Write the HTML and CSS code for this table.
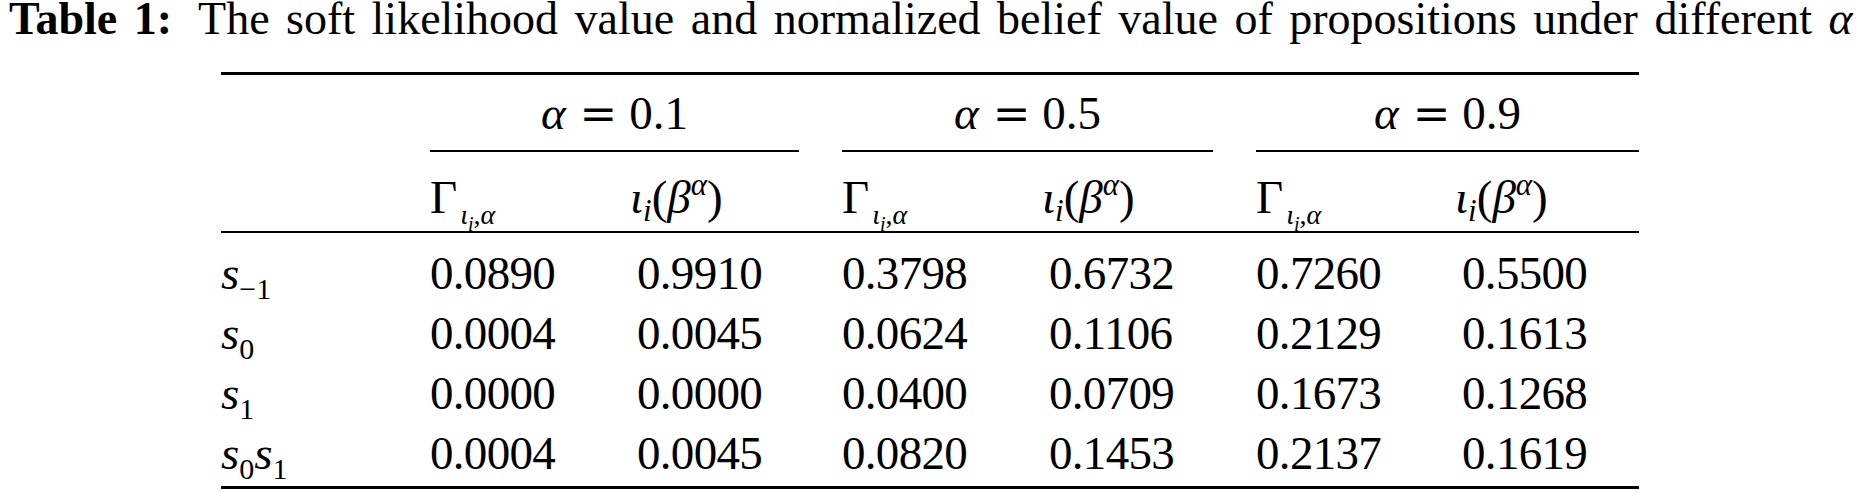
FILE: index.html
```html
<!DOCTYPE html>
<html lang="en">
<head>
<meta charset="utf-8">
<title>Table 1</title>
<link rel="stylesheet" href="styles.css">
</head>
<body>
<p class="caption"><b class="caption-label">Table 1:</b>The soft likelihood value and normalized belief value of propositions under different <i>α</i></p>
<table class="tbl">
  <colgroup>
    <col class="c-label">
    <col class="c-1"><col class="c-2">
    <col class="c-3"><col class="c-4">
    <col class="c-5"><col class="c-6">
  </colgroup>
  <thead>
    <tr class="group-row">
      <th></th>
      <th colspan="2" class="grp grp-gap"><div class="grp-label"><i>α</i><span class="eq">=</span>0.1</div></th>
      <th colspan="2" class="grp grp-gap"><div class="grp-label"><i>α</i><span class="eq">=</span>0.5</div></th>
      <th colspan="2" class="grp"><div class="grp-label"><i>α</i><span class="eq">=</span>0.9</div></th>
    </tr>
    <tr class="sub-row">
      <th></th>
      <th>Γ<span class="sub"><i>ι</i><span class="subsub"><i>i</i></span>,<i>α</i></span></th>
      <th><span class="iota-head"><i>ι</i><span class="sub1"><i>i</i></span>(<i>β</i><span class="sup"><i>α</i></span>)</span></th>
      <th>Γ<span class="sub"><i>ι</i><span class="subsub"><i>i</i></span>,<i>α</i></span></th>
      <th><span class="iota-head"><i>ι</i><span class="sub1"><i>i</i></span>(<i>β</i><span class="sup"><i>α</i></span>)</span></th>
      <th>Γ<span class="sub"><i>ι</i><span class="subsub"><i>i</i></span>,<i>α</i></span></th>
      <th><span class="iota-head"><i>ι</i><span class="sub1"><i>i</i></span>(<i>β</i><span class="sup"><i>α</i></span>)</span></th>
    </tr>
  </thead>
  <tbody>
    <tr>
      <td class="lbl"><i>s</i><span class="lsub">−1</span></td>
      <td>0.0890</td><td>0.9910</td><td>0.3798</td><td>0.6732</td><td>0.7260</td><td>0.5500</td>
    </tr>
    <tr>
      <td class="lbl"><i>s</i><span class="lsub">0</span></td>
      <td>0.0004</td><td>0.0045</td><td>0.0624</td><td>0.1106</td><td>0.2129</td><td>0.1613</td>
    </tr>
    <tr>
      <td class="lbl"><i>s</i><span class="lsub">1</span></td>
      <td>0.0000</td><td>0.0000</td><td>0.0400</td><td>0.0709</td><td>0.1673</td><td>0.1268</td>
    </tr>
    <tr>
      <td class="lbl"><i>s</i><span class="lsub">0</span><i>s</i><span class="lsub">1</span></td>
      <td>0.0004</td><td>0.0045</td><td>0.0820</td><td>0.1453</td><td>0.2137</td><td>0.1619</td>
    </tr>
  </tbody>
</table>
</body>
</html>
```
FILE: styles.css
```css
* { box-sizing: border-box; }

html, body {
  margin: 0;
  background: #ffffff;
}

body {
  font-family: "Liberation Serif", "Times New Roman", serif;
  color: #000000;
}

.caption {
  margin: 0;
  padding: 0 0 0 9px;
  font-size: 46px;
  line-height: 38px;
  word-spacing: 5px;
  white-space: nowrap;
}

.caption-label {
  font-weight: bold;
  margin-right: 26px;
}

.tbl {
  margin: 34px 0 0 221px;
  width: 1418px;
  table-layout: fixed;
  border-collapse: separate;
  border-spacing: 0;
  border-top: 3px solid #000;
  border-bottom: 3px solid #000;
  font-size: 47px;
}

.c-label { width: 209px; }
.c-1 { width: 207px; }
.c-2 { width: 205px; }
.c-3 { width: 207px; }
.c-4 { width: 207px; }
.c-5 { width: 206px; }
.c-6 { width: 177px; }

.tbl th,
.tbl td {
  padding: 0;
  text-align: left;
  font-weight: normal;
  vertical-align: middle;
  line-height: 60px;
  white-space: nowrap;
}

.group-row th {
  padding-top: 8px;
  vertical-align: top;
}

.grp-gap { padding-right: 43px !important; }

.grp-label {
  text-align: center;
  line-height: 60px;
  padding-bottom: 6px;
  border-bottom: 2px solid #000;
}

.eq {
  font-family: "DejaVu Serif", "Liberation Serif", serif;
  font-size: 45px;
  margin: 0 12px 0 14px;
}

.sub-row th {
  padding-top: 15px;
  padding-bottom: 4px;
  border-bottom: 2px solid #000;
}

.sub {
  font-size: 28px;
  line-height: 0;
  position: relative;
  top: 11px;
  margin-left: 3px;
}

.subsub {
  font-size: 20px;
  line-height: 0;
  position: relative;
  top: 7px;
}

.iota-head {
  margin-left: -7px;
}

.sub1 {
  font-size: 31px;
  line-height: 0;
  position: relative;
  top: 8px;
}

.sup {
  font-size: 31px;
  line-height: 0;
  position: relative;
  top: -18px;
}

.lsub {
  font-size: 30px;
  line-height: 0;
  position: relative;
  top: 10px;
}

.tbl tbody td {
  letter-spacing: -0.7px;
}

.tbl tbody td.lbl {
  letter-spacing: 0;
}

.tbl tbody tr:first-child td { padding-top: 10px; }
.tbl tbody tr:last-child td { padding-bottom: 3px; }
```
